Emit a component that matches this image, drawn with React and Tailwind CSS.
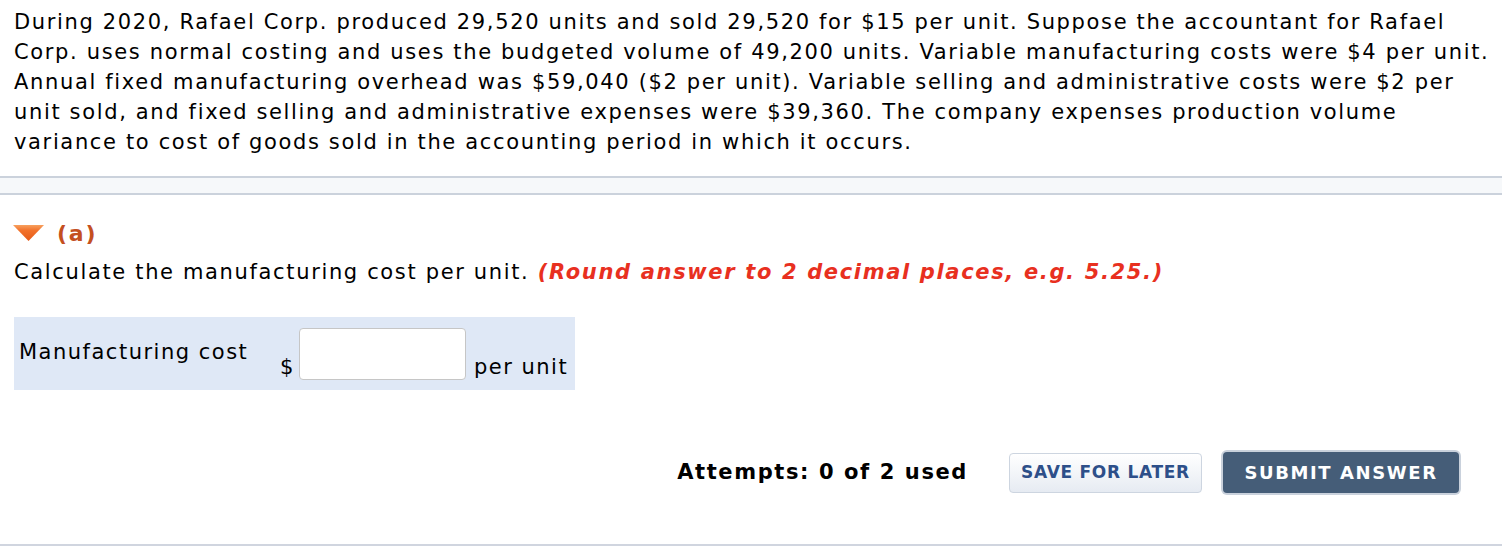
import React from 'react'

const FONT = "font-['DejaVu_Sans','Verdana',sans-serif]"

export default function App() {
  return (
    <div className={`${FONT} w-[1502px] h-[546px] bg-white text-black overflow-hidden flex flex-col`}>
      {/* Question stem */}
      <p className="px-[14px] pt-[7px] text-[21px] leading-[30px] tracking-[1.65px] whitespace-nowrap">
        During 2020, Rafael Corp. produced 29,520 units and sold 29,520 for $15 per unit. Suppose the accountant for Rafael<br />
        Corp. uses normal costing and uses the budgeted volume of 49,200 units. Variable manufacturing costs were $4 per unit.<br />
        Annual fixed manufacturing overhead was $59,040 ($2 per unit). Variable selling and administrative costs were $2 per<br />
        unit sold, and fixed selling and administrative expenses were $39,360. The company expenses production volume<br />
        variance to cost of goods sold in the accounting period in which it occurs.
      </p>

      {/* Divider band */}
      <div className="mt-[19px] h-[19px] bg-[#f6f8fa] border-y-2 border-[#cbd2dc]" />

      {/* Part (a) */}
      <div className="px-[13px] pt-[24px]">
        <div className="flex items-center gap-[13px] h-[28px]">
          <svg width="31" height="16" viewBox="0 0 31 16">
            <defs>
              <linearGradient id="tri" x1="0" y1="0" x2="0" y2="1">
                <stop offset="0" stopColor="#f7a05e" />
                <stop offset="0.35" stopColor="#f2712a" />
                <stop offset="1" stopColor="#e55a17" />
              </linearGradient>
            </defs>
            <polygon points="0,0 31,0 15.5,16" fill="url(#tri)" />
          </svg>
          <span className="text-[22px] font-bold tracking-[1.8px] text-[#c4501f]">(a)</span>
        </div>
        <p className="mt-[10px] text-[21px] leading-[30px] tracking-[1.65px] pl-px whitespace-nowrap">
          Calculate the manufacturing cost per unit.{' '}
          <span className="font-bold italic text-[#e8301f]">(Round answer to 2 decimal places, e.g. 5.25.)</span>
        </p>

        {/* Answer box */}
        <div className="mt-[30px] ml-px w-[561px] h-[73px] bg-[#dfe8f6] flex text-[21px] leading-[30px] tracking-[1.5px]">
          <div className="pl-[5px] pt-[20px] w-[266px] whitespace-nowrap">Manufacturing cost</div>
          <div className="flex items-end pb-[10px]">
            <span className="mb-[-2px]">$</span>
            <div className="ml-[4px] w-[167px] h-[52px] bg-white border border-[#c6c6c6] rounded-[4px]" />
            <span className="ml-[8px] mb-[-2px] whitespace-nowrap">per unit</span>
          </div>
        </div>
      </div>

      {/* Actions */}
      <div className="mt-[60px] flex items-center justify-end pr-[41px]">
        <span className="text-[21px] font-bold tracking-[1.6px] mr-[41px] whitespace-nowrap">Attempts: 0 of 2 used</span>
        <button className="h-[40px] w-[193px] rounded-[4px] border border-[#cdd5e0] bg-gradient-to-b from-white to-[#e6ebf2] text-[17px] font-bold tracking-[0.7px] text-[#2d4f89]">
          SAVE FOR LATER
        </button>
        <div className="ml-[19px] p-[2px] rounded-[6px] bg-[#c9d1dc]">
          <button className="h-[41px] w-[236px] rounded-[4px] bg-[#455d78] text-[18px] font-bold tracking-[1.6px] text-white">
            SUBMIT ANSWER
          </button>
        </div>
      </div>

      <div className="mt-auto h-[2px] bg-[#d0d5df]" />
    </div>
  )
}
